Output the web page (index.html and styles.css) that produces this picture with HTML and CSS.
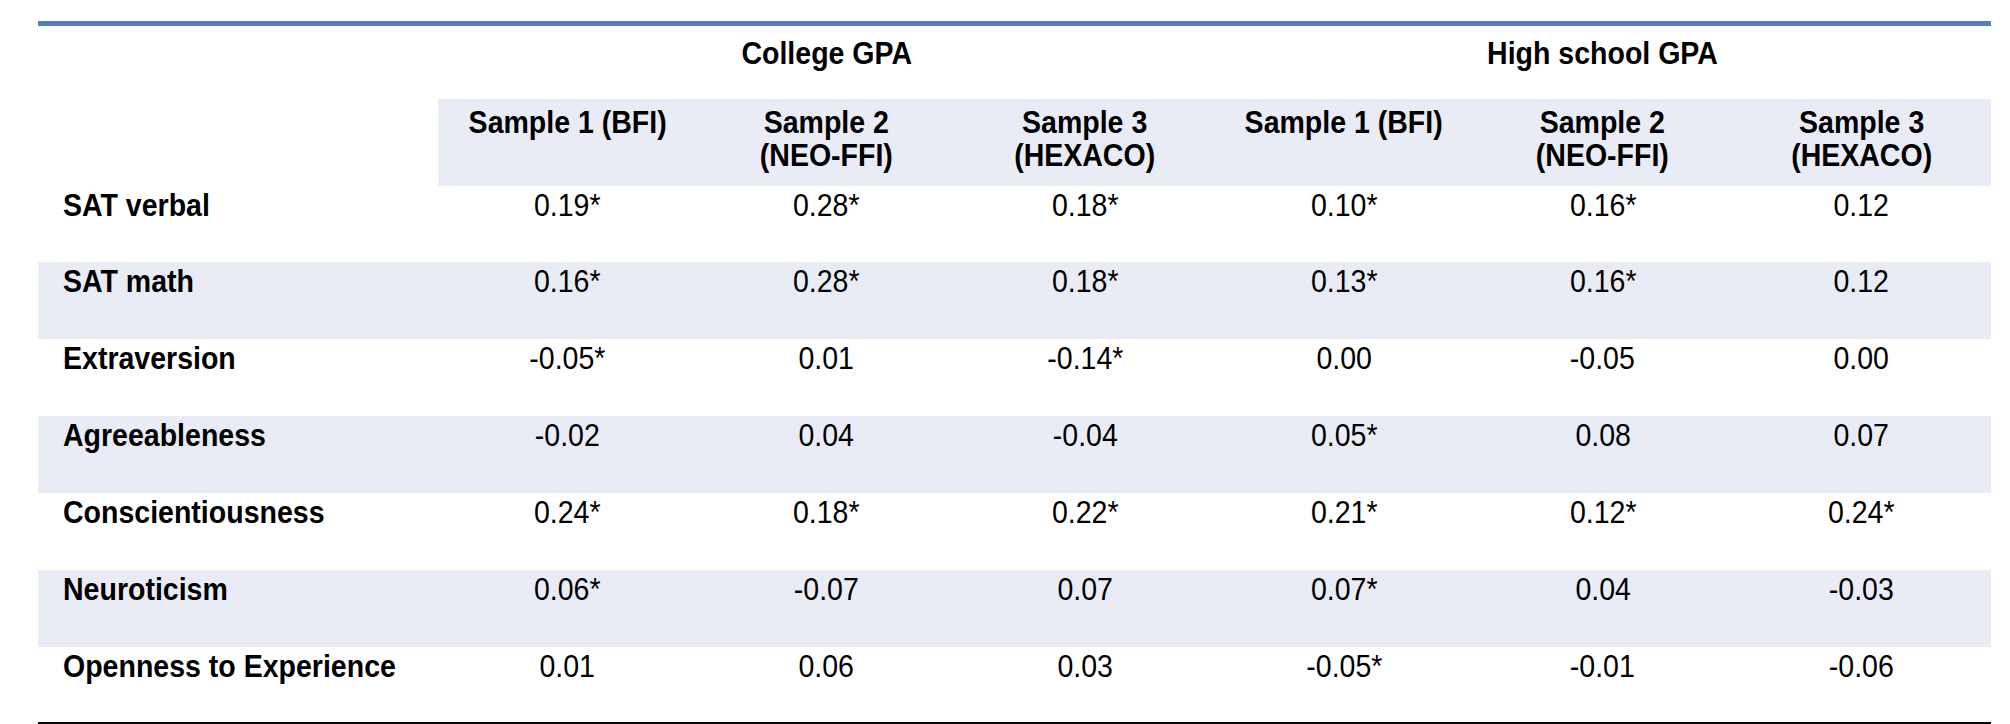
FILE: index.html
```html
<!DOCTYPE html>
<html lang="en">
<head>
<meta charset="utf-8">
<title>GPA correlations</title>
<link rel="stylesheet" href="styles.css">
</head>
<body>
<table class="gpa">
  <colgroup>
    <col class="c-label">
    <col class="c-val"><col class="c-val"><col class="c-val">
    <col class="c-val"><col class="c-val"><col class="c-val">
  </colgroup>
  <thead>
    <tr class="grp">
      <th></th>
      <th colspan="3"><span class="t">College GPA</span></th>
      <th colspan="3"><span class="t">High school GPA</span></th>
    </tr>
    <tr class="sub">
      <th class="blank"></th>
      <th><span class="t">Sample 1 (BFI)</span></th>
      <th><span class="t">Sample 2<br>(NEO-FFI)</span></th>
      <th><span class="t">Sample 3<br>(HEXACO)</span></th>
      <th><span class="t">Sample 1 (BFI)</span></th>
      <th><span class="t">Sample 2<br>(NEO-FFI)</span></th>
      <th><span class="t">Sample 3<br>(HEXACO)</span></th>
    </tr>
  </thead>
  <tbody>
    <tr><th><span class="t">SAT verbal</span></th><td><span class="t">0.19*</span></td><td><span class="t">0.28*</span></td><td><span class="t">0.18*</span></td><td><span class="t">0.10*</span></td><td><span class="t">0.16*</span></td><td><span class="t">0.12</span></td></tr>
    <tr class="band"><th><span class="t">SAT math</span></th><td><span class="t">0.16*</span></td><td><span class="t">0.28*</span></td><td><span class="t">0.18*</span></td><td><span class="t">0.13*</span></td><td><span class="t">0.16*</span></td><td><span class="t">0.12</span></td></tr>
    <tr><th><span class="t">Extraversion</span></th><td><span class="t">-0.05*</span></td><td><span class="t">0.01</span></td><td><span class="t">-0.14*</span></td><td><span class="t">0.00</span></td><td><span class="t">-0.05</span></td><td><span class="t">0.00</span></td></tr>
    <tr class="band"><th><span class="t">Agreeableness</span></th><td><span class="t">-0.02</span></td><td><span class="t">0.04</span></td><td><span class="t">-0.04</span></td><td><span class="t">0.05*</span></td><td><span class="t">0.08</span></td><td><span class="t">0.07</span></td></tr>
    <tr><th><span class="t">Conscientiousness</span></th><td><span class="t">0.24*</span></td><td><span class="t">0.18*</span></td><td><span class="t">0.22*</span></td><td><span class="t">0.21*</span></td><td><span class="t">0.12*</span></td><td><span class="t">0.24*</span></td></tr>
    <tr class="band"><th><span class="t">Neuroticism</span></th><td><span class="t">0.06*</span></td><td><span class="t">-0.07</span></td><td><span class="t">0.07</span></td><td><span class="t">0.07*</span></td><td><span class="t">0.04</span></td><td><span class="t">-0.03</span></td></tr>
    <tr><th><span class="t">Openness to Experience</span></th><td><span class="t">0.01</span></td><td><span class="t">0.06</span></td><td><span class="t">0.03</span></td><td><span class="t">-0.05*</span></td><td><span class="t">-0.01</span></td><td><span class="t">-0.06</span></td></tr>
  </tbody>
</table>
</body>
</html>
```

FILE: styles.css
```css
html, body {
  margin: 0;
  padding: 0;
  background: #ffffff;
}

body {
  padding: 21px 0 0 38px;
  font-family: "Liberation Sans", Arial, sans-serif;
  color: #000000;
}

.gpa {
  width: 1953px;
  border-collapse: collapse;
  border-top: 5px solid #4f81bd;
  border-bottom: 3px solid #000000;
  table-layout: fixed;
  font-size: 31px;
  line-height: 32px;
}

.c-label { width: 400px; }

.gpa th,
.gpa td {
  padding: 0;
  vertical-align: top;
  text-align: center;
}

/* the source uses a slightly condensed face */
.t {
  display: inline-block;
  transform: scaleX(0.92);
  transform-origin: center top;
}

.grp th {
  height: 75px;
  padding-top: 12px;
  font-weight: bold;
  box-sizing: border-box;
}

.sub th {
  height: 87px;
  padding-top: 7px;
  font-weight: bold;
  line-height: 33px;
  background: #eaecf5;
  box-sizing: border-box;
}

.sub th.blank { background: #ffffff; }

.gpa tbody th,
.gpa tbody td {
  height: 76.9px;
  padding-top: 4px;
  box-sizing: border-box;
}

.gpa tbody th {
  text-align: left;
  padding-left: 25px;
  font-weight: bold;
}

.gpa tbody th .t { transform-origin: left top; }

.gpa tbody td {
  font-weight: normal;
  font-size: 31px;
}

.gpa tbody tr.band th,
.gpa tbody tr.band td {
  background: #eaecf5;
}
```
